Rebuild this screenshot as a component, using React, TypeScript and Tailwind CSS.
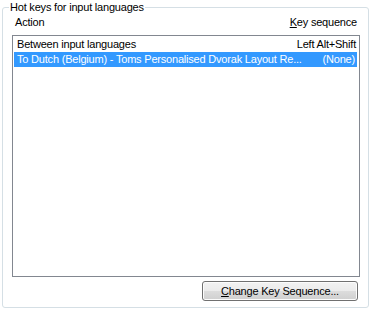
export default function App() {
  return (
    <div
      className="w-[371px] h-[310px] bg-white pt-[7px] pl-[2px] text-[11px] tracking-[-0.2px] text-black"
      style={{ fontFamily: '"Liberation Sans", Arial, sans-serif' }}
    >
      <div className="relative w-[367px] h-[301px] rounded-[3px] border border-[#d5dfe5] pl-[9px] pr-[8px]">
        <span className="absolute left-[6px] top-[-8px] bg-white px-[1px] leading-[14px]">
          Hot keys for input languages
        </span>

        <div className="mt-[7px] flex justify-between px-[3px] leading-[15px]">
          <span>Action</span>
          <span>
            <span className="underline">K</span>ey sequence
          </span>
        </div>

        <div className="mt-[5px] h-[242px] w-[348px] border border-[#828790] bg-white p-px">
          <div className="flex justify-between pl-[3px] pr-[2px] leading-[15px]">
            <span>Between input languages</span>
            <span>Left Alt+Shift</span>
          </div>
          <div className="flex justify-between bg-[#3399ff] pl-[3px] pr-[2px] leading-[15px] text-white mr-px">
            <span>To Dutch (Belgium) - Toms Personalised Dvorak Layout Re...</span>
            <span>(None)</span>
          </div>
        </div>

        <div className="mt-[4px] flex justify-end pr-[2px]">
          <button className="h-[20px] w-[156px] rounded-[3px] border border-[#707070] bg-[linear-gradient(to_bottom,#f2f2f2_0%,#ebebeb_50%,#dddddd_50%,#cfcfcf_100%)] leading-[18px] shadow-[inset_0_0_0_1px_#fcfcfc]">
            <span className="underline">C</span>hange Key Sequence...
          </button>
        </div>
      </div>
    </div>
  )
}
